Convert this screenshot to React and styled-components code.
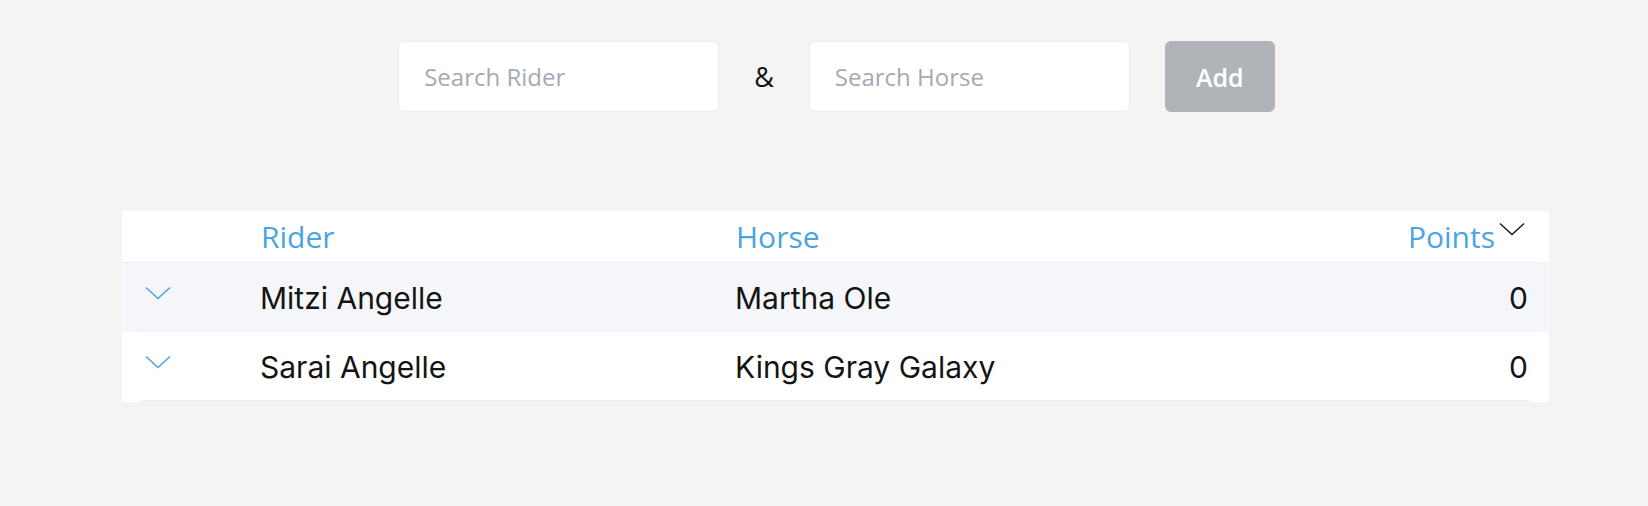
import React from 'react'
import styled, { createGlobalStyle } from 'styled-components'

const GlobalStyle = createGlobalStyle`
  html, body {
    margin: 0;
    padding: 0;
    background: #f4f4f4;
  }
  * {
    box-sizing: border-box;
  }
`

const entries = [
  { rider: 'Mitzi Angelle', horse: 'Martha Ole', points: 0 },
  { rider: 'Sarai Angelle', horse: 'Kings Gray Galaxy', points: 0 },
]

const Chevron = ({ color = '#4fa6dc', width = 1.6 }) => (
  <svg width="26" height="14" viewBox="0 0 26 14" fill="none">
    <path d="M1 1.5 L13 12.5 L25 1.5" stroke={color} strokeWidth={width} />
  </svg>
)

const App = () => {
  return (
    <Page>
      <GlobalStyle />
      <SearchBar>
        <SearchInput placeholder="Search Rider" />
        <Amp>&amp;</Amp>
        <SearchInput placeholder="Search Horse" />
        <AddButton disabled>Add</AddButton>
      </SearchBar>

      <Table>
        <HeaderRow>
          <span />
          <HeadCell>Rider</HeadCell>
          <HeadCell>Horse</HeadCell>
          <HeadCell className="points">
            Points
            <SortIcon>
              <Chevron color="#111" width={1.3} />
            </SortIcon>
          </HeadCell>
        </HeaderRow>
        {entries.map((e, i) => (
          <Row key={e.rider} shaded={i === 0}>
            <Toggle>
              <Chevron />
            </Toggle>
            <Cell>{e.rider}</Cell>
            <Cell>{e.horse}</Cell>
            <Cell className="points">{e.points}</Cell>
          </Row>
        ))}
      </Table>
    </Page>
  )
}

export default App

const Page = styled.div`
  width: 1427px;
  margin-left: 122px;
  padding-top: 41px;
`

const SearchBar = styled.div`
  display: flex;
  align-items: center;
  justify-content: center;
  gap: 36px;
  padding-left: 3px;
  margin-bottom: 99px;
`

const SearchInput = styled.input`
  width: 319px;
  height: 69px;
  border: none;
  border-radius: 5px;
  background: #fff;
  box-shadow: 0 0 0 1px #ececec;
  padding: 0 25px;
  font-family: 'Open Sans', sans-serif;
  font-size: 24px;
  color: #222;
  outline: none;

  &::placeholder {
    color: #a3aab4;
  }
`

const Amp = styled.span`
  font-family: 'Open Sans', sans-serif;
  font-size: 27px;
  color: #111;
`

const AddButton = styled.button`
  width: 110px;
  height: 71px;
  border: none;
  border-radius: 6px;
  background: #b0b3b8;
  color: #fff;
  font-family: 'Open Sans', sans-serif;
  font-weight: 600;
  font-size: 25px;
`

const Table = styled.div`
  background: #fff;
  padding-bottom: 1px;
`

const grid = `
  display: grid;
  grid-template-columns: 140px 475px 1fr 200px;
  align-items: center;
  padding-right: 21px;
`

const HeaderRow = styled.div`
  ${grid}
  height: 52px;
  border-bottom: 1px solid #eeeff2;
`

const HeadCell = styled.div`
  font-family: 'Open Sans', sans-serif;
  font-size: 30px;
  font-weight: 500;
  color: #4aa5de;
  margin-left: -1px;

  &.points {
    position: relative;
    text-align: right;
    padding-right: 33px;
  }
`

const SortIcon = styled.span`
  position: absolute;
  right: 3px;
  top: -12px;
`

const Row = styled.div`
  ${grid}
  position: relative;
  height: 69px;
  background: ${p => (p.shaded ? '#f5f6f9' : '#fff')};

  &::after {
    content: '';
    position: absolute;
    left: 20px;
    right: 20px;
    bottom: -1px;
    height: 2px;
    background: #eff0f2;
  }
`

const Toggle = styled.div`
  padding-left: 23px;
  display: flex;
  margin-top: -9px;
`

const Cell = styled.div`
  font-family: Inter, 'Open Sans', sans-serif;
  font-size: 30px;
  color: #141414;
  margin-left: -2px;

  &.points {
    text-align: right;
  }
`
